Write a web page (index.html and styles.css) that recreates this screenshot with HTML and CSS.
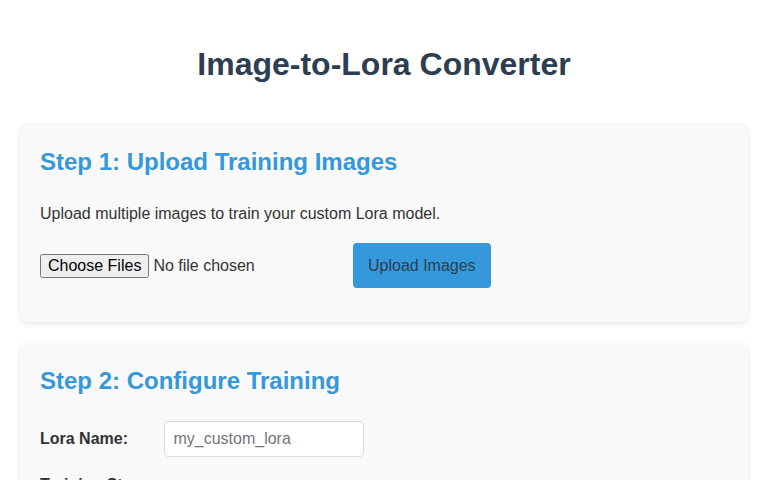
FILE: index.html
```html
<!DOCTYPE html>
<html lang="en">
<head>
<meta charset="utf-8">
<title>Image-to-Lora Converter</title>
<link rel="stylesheet" href="styles.css">
</head>
<body>
<div class="container">
  <h1 class="title">Image-to-Lora Converter</h1>

  <section class="card">
    <h2 class="card-title">Step 1: Upload Training Images</h2>
    <p class="card-text">Upload multiple images to train your custom Lora model.</p>
    <div class="upload-row">
      <input type="file" class="file-input" multiple accept="image/*">
      <button class="btn" type="button">Upload Images</button>
    </div>
  </section>

  <section class="card">
    <h2 class="card-title">Step 2: Configure Training</h2>
    <div class="form-group">
      <label class="form-label" for="lora-name">Lora Name:</label>
      <input id="lora-name" class="text-input" type="text" placeholder="my_custom_lora">
    </div>
    <div class="form-group">
      <label class="form-label form-label-block" for="steps">Training Steps:</label>
      <input id="steps" class="range-input" type="range" min="100" max="5000" value="1000">
    </div>
  </section>
</div>
</body>
</html>
```

FILE: styles.css
```css
html, body {
  margin: 0;
  padding: 0;
  background: #ffffff;
}

body {
  font-family: "Liberation Sans", Arial, sans-serif;
  line-height: 1.6;
  color: #333333;
}

.container {
  padding: 20px;
}

.title {
  margin: 26px 0 40px;
  font-size: 32px;
  line-height: 1.15;
  text-align: center;
  color: #2c3e50;
}

.card {
  background: #f9f9f9;
  border-radius: 8px;
  box-shadow: 0 2px 5px rgba(0, 0, 0, 0.1);
  padding: 20px;
  margin-bottom: 20px;
}

.card-title {
  margin: 0 0 20px;
  font-size: 24px;
  color: #3498db;
}

.card-text {
  margin: 0 0 16px;
  font-size: 16px;
}

.upload-row {
  display: flex;
  align-items: center;
  padding-bottom: 14px;
}

.file-input {
  width: 303px;
  margin: 0 10px 0 0;
  font-family: "Liberation Sans", Arial, sans-serif;
  font-size: 16px;
  color: #333333;
}

.btn {
  background: #3498db;
  color: #2c3e50;
  border: none;
  border-radius: 4px;
  padding: 10px 15px;
  font-family: "Liberation Sans", Arial, sans-serif;
  font-size: 16px;
  line-height: 1.6;
  cursor: pointer;
}

.form-group {
  margin-bottom: 15px;
}

.form-label {
  display: inline-block;
  width: 120px;
  font-weight: bold;
  font-size: 16px;
}

.form-label-block {
  display: block;
  width: auto;
}

.text-input {
  width: 200px;
  box-sizing: border-box;
  padding: 8px;
  border: 1px solid #dddddd;
  border-radius: 4px;
  background: #ffffff;
  font-family: "Liberation Sans", Arial, sans-serif;
  font-size: 16px;
  color: #333333;
}

.text-input::placeholder {
  color: #757575;
}

.range-input {
  width: 300px;
}
```
